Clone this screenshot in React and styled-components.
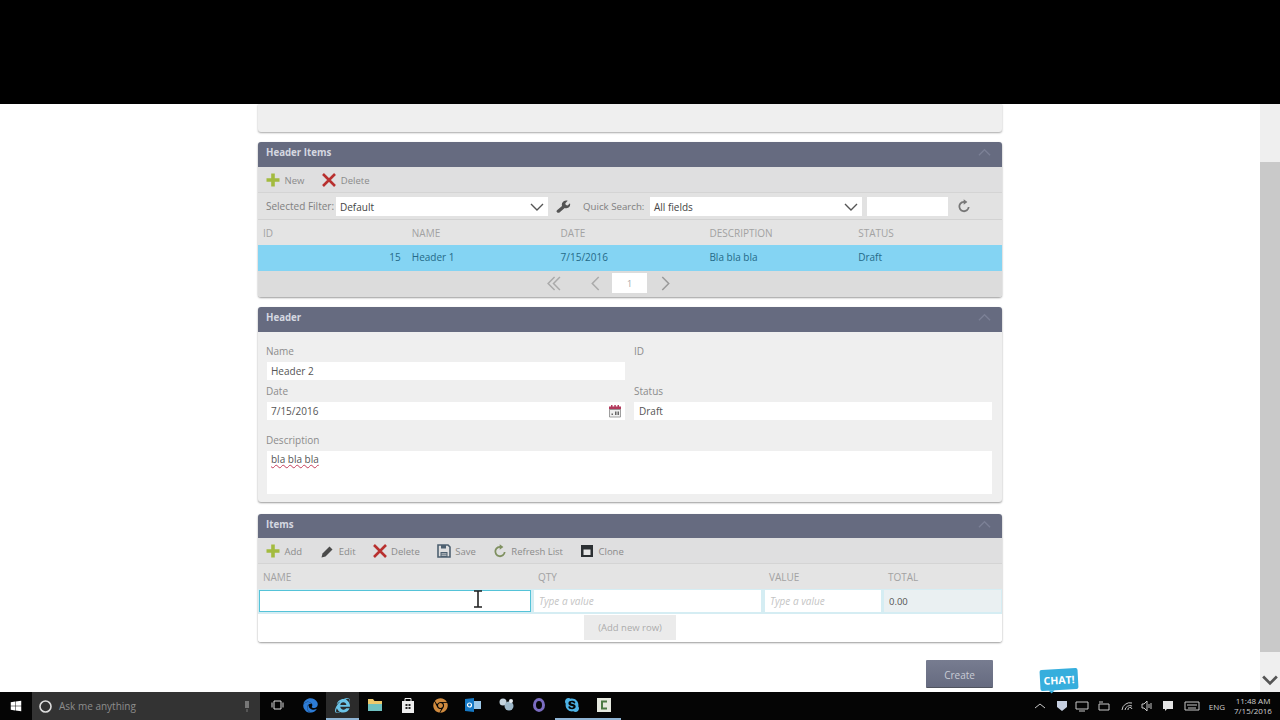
import React from 'react';
import styled, { createGlobalStyle } from 'styled-components';
import { FaChrome, FaEdge, FaInternetExplorer, FaSkype, FaWindows } from 'react-icons/fa';

const GlobalStyle = createGlobalStyle`
  html, body {
    margin: 0;
    height: 100%;
    overflow: hidden;
    background: #000;
    font-family: "Open Sans", "Liberation Sans", sans-serif;
  }
  * { box-sizing: border-box; }
`;

const Screen = styled.div`
  position: relative;
  width: 1280px;
  height: 720px;
  display: flex;
  flex-direction: column;
  background: #000;
`;

const TopBlack = styled.div`
  height: 104px;
  flex: none;
`;

const Viewport = styled.div`
  height: 588px;
  flex: none;
  display: flex;
  background: #fff;
  overflow: hidden;
`;

const Page = styled.div`
  flex: 1;
  display: flex;
  flex-direction: column;
  align-items: center;
`;

const Column = styled.div`
  width: 744px;
  display: flex;
  flex-direction: column;
`;

const Panel = styled.section`
  margin-top: ${(p) => p.$top || 10}px;
  background: ${(p) => p.$bg || '#efefef'};
  border-radius: 3px;
  box-shadow: 0 1px 2px rgba(0, 0, 0, 0.4);
  overflow: hidden;
`;

const Stub = styled.div`
  height: 28px;
  background: #efefef;
  border-radius: 0 0 3px 3px;
  box-shadow: 0 1px 2px rgba(0, 0, 0, 0.35);
`;

const TitleBar = styled.div`
  height: ${(p) => p.$h || 25}px;
  display: flex;
  align-items: center;
  justify-content: space-between;
  padding: 0 11px ${(p) => (p.$h ? 4 : 5)}px 8px;
  background: #666b80;
  color: #d5d8e0;
  font-size: 9.7px;
  font-weight: 700;
`;

const Toolbar = styled.div`
  height: 26px;
  display: flex;
  align-items: center;
  padding: 1px 0 0 8px;
  background: #dfdfe0;
  border-bottom: 1px solid #d4d4d4;
`;

const ToolButton = styled.div`
  display: flex;
  align-items: center;
  gap: 4.5px;
  margin-right: ${(p) => p.$gap}px;
  color: #8b8b8b;
  font-size: 9.5px;
`;

const FilterRow = styled.div`
  height: 27px;
  display: flex;
  align-items: center;
  padding-left: 8px;
  background: #e2e2e2;
  border-bottom: 1px solid #d2d2d2;
  color: #808080;
  font-size: 10px;
`;

const FilterLabel = styled.span`
  width: ${(p) => p.$w}px;
  flex: none;
  padding-left: ${(p) => p.$pad || 0}px;
  white-space: nowrap;
  font-size: ${(p) => p.$size || 10}px;
`;

const SelectBox = styled.div`
  width: ${(p) => p.$w}px;
  height: 19px;
  flex: none;
  display: flex;
  align-items: center;
  justify-content: space-between;
  padding: 1px 4px 0 4px;
  background: #fff;
  color: #444;
  font-size: 10px;
`;

const FilterSlot = styled.span`
  width: ${(p) => p.$w}px;
  flex: none;
  display: flex;
  justify-content: center;
`;

const QuickInput = styled.div`
  width: 81px;
  height: 19px;
  flex: none;
  margin-left: 5px;
  background: #fff;
`;

const HeadRow = styled.div`
  height: 25px;
  display: grid;
  grid-template-columns: ${(p) => p.$cols};
  align-items: center;
  padding-top: 1px;
  background: #e4e4e4;
`;

const HeadCell = styled.div`
  padding-left: 5px;
  color: #a2a2a2;
  font-size: 10px;
`;

const SelectedRow = styled.div`
  height: 26px;
  display: grid;
  grid-template-columns: repeat(5, 1fr);
  align-items: center;
  padding-bottom: 2px;
  background: #84d4f3;
  color: #256a88;
  font-size: 10px;
`;

const Cell = styled.div`
  padding: ${(p) => (p.$right ? '0 6px 0 0' : '0 0 0 5px')};
  text-align: ${(p) => (p.$right ? 'right' : 'left')};
`;

const Pager = styled.div`
  height: 26px;
  display: flex;
  align-items: center;
  justify-content: center;
  padding: 0 41px 2px 0;
  background: #dcdcdc;
  color: #b0b0b0;
`;

const PagerGap = styled.span`
  width: 27px;
`;

const PageNumber = styled.div`
  width: 35px;
  height: 20px;
  margin: 0 11px 0 9px;
  display: flex;
  align-items: center;
  justify-content: center;
  background: #fff;
  color: #a5a5a5;
  font-size: 9px;
`;

const FormBody = styled.div`
  padding: 12px 10px 8px 8px;
  display: grid;
  grid-template-columns: 359px 358px;
  column-gap: 9px;
  row-gap: 4px;
`;

const Field = styled.div`
  display: flex;
  flex-direction: column;
  gap: 4px;
  grid-column: ${(p) => (p.$wide ? '1 / -1' : 'auto')};
  margin-top: ${(p) => (p.$wide ? 9 : 0)}px;
`;

const FieldLabel = styled.label`
  height: 14px;
  line-height: 14px;
  color: #8c8c8c;
  font-size: 10px;
`;

const FieldInput = styled.div`
  height: 18px;
  display: flex;
  align-items: center;
  justify-content: space-between;
  margin-left: ${(p) => (p.$inset ? 1 : 0)}px;
  padding: 0 3px 1px ${(p) => (p.$inset ? 4 : 5)}px;
  background: ${(p) => (p.$empty ? 'transparent' : '#fff')};
  color: #555;
  font-size: 10px;
`;

const TextArea = styled.div`
  height: 43px;
  margin-left: 1px;
  padding: 1px 4px;
  background: #fff;
  color: #555;
  font-size: 10px;
  line-height: 14px;
`;

const Misspelled = styled.span`
  text-decoration: underline wavy #c4405c 1px;
  text-underline-offset: 1px;
`;

const EditRow = styled.div`
  height: 25px;
  display: grid;
  grid-template-columns: 275px 231px 119px 117px;
  background: #d5edf3;
  padding: 1px 1px 2px 1px;
`;

const EditCell = styled.div`
  margin-right: ${(p) => p.$mr || 0}px;
  display: flex;
  align-items: center;
  padding-left: 5px;
  background: ${(p) => (p.$total ? '#eaf0f2' : '#fff')};
  border: ${(p) => (p.$focus ? '1.5px solid #55c3d8' : 'none')};
  color: ${(p) => (p.$total ? '#555' : '#c4c4c4')};
  font-size: ${(p) => (p.$total ? 9.5 : 10)}px;
  font-style: ${(p) => (p.$total ? 'normal' : 'italic')};
`;

const AddRow = styled.div`
  height: 28px;
  display: flex;
  justify-content: center;
  background: #fff;
  padding-top: 1px;
`;

const AddButton = styled.div`
  width: 92px;
  height: 25px;
  display: flex;
  align-items: center;
  justify-content: center;
  background: #ebebeb;
  color: #ababab;
  font-size: 9.5px;
`;

const Actions = styled.div`
  display: flex;
  justify-content: flex-end;
  padding: 18px 9px 0 0;
`;

const CreateButton = styled.div`
  width: 67px;
  height: 28px;
  display: flex;
  align-items: center;
  justify-content: center;
  padding-top: 2px;
  background: linear-gradient(#777c90, #666b80);
  border-bottom: 1px solid #50545f;
  border-radius: 1px;
  color: #c9ccd6;
  font-size: 10px;
`;

const Scrollbar = styled.div`
  width: 20px;
  flex: none;
  display: flex;
  flex-direction: column;
  background: #efefef;
`;

const ScrollTrack = styled.div`
  height: 58px;
  flex: none;
`;

const ScrollThumb = styled.div`
  height: 490px;
  flex: none;
  background: #c9c9c9;
`;

const ScrollEnd = styled.div`
  flex: 1;
  display: flex;
  align-items: flex-end;
  justify-content: center;
  padding: 0 1px 4px 0;
`;

const Taskbar = styled.div`
  height: 28px;
  flex: none;
  display: flex;
  align-items: center;
  background: #050505;
`;

const StartButton = styled.div`
  width: 32px;
  height: 28px;
  flex: none;
  display: flex;
  align-items: center;
  justify-content: center;
  color: #fff;
`;

const SearchBox = styled.div`
  width: 228px;
  height: 28px;
  flex: none;
  display: flex;
  align-items: center;
  gap: 6px;
  padding: 0 9px 0 6px;
  background: #333;
  color: #8d8d8d;
  font-size: 10px;
`;

const SearchText = styled.span`
  flex: 1;
`;

const AppSlot = styled.div`
  width: 32.7px;
  height: 28px;
  flex: none;
  display: flex;
  align-items: center;
  justify-content: center;
  background: ${(p) => (p.$active ? '#2b2b2b' : 'transparent')};
  border-bottom: 2px solid ${(p) => (p.$open ? '#8fb4d4' : 'transparent')};
  color: ${(p) => p.$color || '#ddd'};
`;

const TaskApps = styled.div`
  display: flex;
  margin-left: 1px;
`;

const Tray = styled.div`
  margin-left: auto;
  display: flex;
  align-items: center;
  color: #cfcfcf;
  font-size: 8px;
`;

const TraySlot = styled.div`
  width: ${(p) => p.$w}px;
  display: flex;
  justify-content: center;
`;

const Clock = styled.div`
  width: 44px;
  margin-right: 5px;
  text-align: center;
  line-height: 10.5px;
  color: #cfcfcf;
  font-size: 8px;
`;

const ChatBadge = styled.div`
  position: absolute;
  left: 1040px;
  top: 669px;
  width: 38px;
  height: 21px;
  display: flex;
  align-items: center;
  justify-content: center;
  background: #36aedd;
  border-radius: 2px;
  color: #fff;
  font-size: 10.5px;
  font-weight: 700;
  transform: rotate(-3deg);

  &::after {
    content: '';
    position: absolute;
    left: 8px;
    bottom: -3px;
    border-top: 3px solid #36aedd;
    border-left: 3px solid transparent;
    border-right: 3px solid transparent;
  }
`;

const CursorMark = styled.svg`
  position: absolute;
  left: 473px;
  top: 590px;
`;

const PlusIcon = () => (
  <svg width="14" height="14" viewBox="0 0 14 14">
    <path d="M5.2 0.5h3.6v4.7h4.7v3.6H8.8v4.7H5.2V8.8H0.5V5.2h4.7z" fill="#a3bb3f" />
  </svg>
);

const CrossIcon = () => (
  <svg width="14" height="14" viewBox="0 0 14 14">
    <path d="M1 1L13 13M13 1L1 13" stroke="#b8302f" strokeWidth="2.6" />
  </svg>
);

const PencilIcon = () => (
  <svg width="13" height="13" viewBox="0 0 13 13">
    <path d="M0.5 12.5l1-4 7-7 3 3-7 7z" fill="#4a4a4a" />
  </svg>
);

const SaveIcon = () => (
  <svg width="14" height="14" viewBox="0 0 14 14">
    <path d="M1 1h10l2 2v10H1z" fill="none" stroke="#4d6070" strokeWidth="1.6" />
    <path d="M4 1h5v3.5H4zM3.5 8h7v5h-7z" fill="#4d6070" />
    <path d="M4.5 9.8h5M4.5 11.3h5" stroke="#dfdfe0" strokeWidth="0.8" />
  </svg>
);

const RefreshIcon = ({ color = '#7f9060' }) => (
  <svg width="14" height="14" viewBox="0 0 14 14">
    <path d="M8.6 3.1A4.7 4.7 0 1 0 11.7 8" fill="none" stroke={color} strokeWidth="1.8" />
    <path d="M6.7 0.3v5.4l3.7-2.7z" fill={color} />
  </svg>
);

const CloneIcon = () => (
  <svg width="14" height="14" viewBox="0 0 14 14">
    <path d="M1 1h12v12H1z" fill="#2c3033" />
    <path d="M3.5 5.5h7v5.5h-7z" fill="#e6e6e6" />
  </svg>
);

const WrenchIcon = () => (
  <svg width="15" height="14" viewBox="0 0 15 14">
    <path d="M1 13.2c-.7-.7-.5-1.4 0-1.9l5-4.4c-.5-1.800.1-3.600 1.700-4.700 1.200-.8 2.800-1 4-.4L9.300 4.300l.5 1.800 1.800.4 2.400-2.300c.5 1.700-.1 3.300-1.400 4.200-1.300.9-2.700 1-3.900.5l-4.900 4.300c-.8.7-1.900.8-2.800 0z" fill="#555" />
  </svg>
);

const Chevron = ({ dir = 'down', size = 14, color = '#555', stroke = 1.4 }) => {
  const paths = {
    down: 'M1 4l6 6 6-6',
    up: 'M1 10l6-6 6 6',
    left: 'M10 1L4 7l6 6',
    right: 'M4 1l6 6-6 6',
    first: 'M8 1L2 7l6 6M13 1L7 7l6 6',
  };
  return (
    <svg width={size} height={size} viewBox="0 0 14 14">
      <path d={paths[dir]} fill="none" stroke={color} strokeWidth={stroke} />
    </svg>
  );
};

const Collapse = () => <Chevron dir="up" size={13} color="#7c8196" stroke={1.3} />;

const Calendar = () => (
  <svg width="14" height="14" viewBox="0 0 14 14">
    <path d="M1 2.500h12v3H1z" fill="#b2395c" />
    <path d="M3 1h1.500v2H3zM6.300 1h1.500v2H6.300zM9.500 1H11v2H9.500z" fill="#b2395c" />
    <path d="M1.500 5.500h11v7.500h-11z" fill="#eee" stroke="#888" strokeWidth="0.8" />
    <path d="M3.500 9.500h1.500v1.500H3.500zM7 7.500h1.500v3.500H7zM9.500 7.500H11v3.500H9.500z" fill="#666" />
  </svg>
);

const Toolbtn = ({ icon, label, gap }) => (
  <ToolButton $gap={gap}>
    {icon}
    <span>{label}</span>
  </ToolButton>
);

const FolderIcon = () => (
  <svg width="16" height="14" viewBox="0 0 16 14">
    <path d="M1 1h5l1.500 2H15v10H1z" fill="#ecc96c" />
    <path d="M1 6h14v7H1z" fill="#6ec1c0" />
  </svg>
);

const StoreIcon = () => (
  <svg width="14" height="16" viewBox="0 0 14 16">
    <path d="M1 4h12v12H1z" fill="#eee" />
    <path d="M4 4V1.500h6V4" fill="none" stroke="#eee" />
    <path d="M4.500 7h2v2h-2zM7.500 7h2v2h-2zM4.500 10h2v2h-2zM7.500 10h2v2h-2z" fill="#222" />
  </svg>
);

const OutlookIcon = () => (
  <svg width="16" height="14" viewBox="0 0 16 14">
    <path d="M0 1l9-1v14l-9-1z" fill="#1578c4" />
    <path d="M9 3h7v8H9z" fill="#9cc8e8" />
    <circle cx="4.500" cy="7" r="2" fill="none" stroke="#fff" strokeWidth="1.200" />
  </svg>
);

const NetworkAppIcon = () => (
  <svg width="17" height="16" viewBox="0 0 17 16">
    <circle cx="5" cy="5" r="3.500" fill="#c4d3dd" />
    <circle cx="11" cy="9" r="4.500" fill="#9eb8c9" />
    <circle cx="13" cy="4" r="2" fill="#e8eef2" />
  </svg>
);

const RingIcon = () => (
  <svg width="14" height="16" viewBox="0 0 14 16">
    <ellipse cx="7" cy="8" rx="4.500" ry="5.500" fill="none" stroke="#7a6cc0" strokeWidth="3" />
  </svg>
);

const CamtasiaIcon = () => (
  <svg width="16" height="16" viewBox="0 0 16 16">
    <path d="M1 1h14v14H1z" fill="#e6e9df" />
    <path d="M11 4.500H6v7h5" fill="none" stroke="#4c7a44" strokeWidth="2" />
  </svg>
);

const TrayGlyph = ({ d, fill = 'none', w = 14 }) => (
  <svg width={w} height="12" viewBox={`0 0 ${w} 12`}>
    <path d={d} fill={fill} stroke={fill === 'none' ? '#c8c8c8' : 'none'} strokeWidth="1" />
  </svg>
);

const itemCols = '275px 231px 119px 119px';
const listCols = 'repeat(5, 1fr)';

const App = () => {
  return (
    <Screen>
      <GlobalStyle />
      <TopBlack />
      <Viewport>
        <Page>
          <Column>
            <Stub />

            <Panel>
              <TitleBar>
                <span>Header Items</span>
                <Collapse />
              </TitleBar>
              <Toolbar>
                <Toolbtn icon={<PlusIcon />} label="New" gap={18} />
                <Toolbtn icon={<CrossIcon />} label="Delete" />
              </Toolbar>
              <FilterRow>
                <FilterLabel $w={70}>Selected Filter:</FilterLabel>
                <SelectBox $w={212}>
                  Default
                  <Chevron />
                </SelectBox>
                <FilterSlot $w={30}>
                  <WrenchIcon />
                </FilterSlot>
                <FilterLabel $w={72} $pad={5} $size={9.7}>Quick Search:</FilterLabel>
                <SelectBox $w={212}>
                  All fields
                  <Chevron />
                </SelectBox>
                <QuickInput />
                <FilterSlot $w={31}>
                  <RefreshIcon color="#777" />
                </FilterSlot>
              </FilterRow>
              <HeadRow $cols={listCols}>
                <HeadCell>ID</HeadCell>
                <HeadCell>NAME</HeadCell>
                <HeadCell>DATE</HeadCell>
                <HeadCell>DESCRIPTION</HeadCell>
                <HeadCell>STATUS</HeadCell>
              </HeadRow>
              <SelectedRow>
                <Cell $right>15</Cell>
                <Cell>Header 1</Cell>
                <Cell>7/15/2016</Cell>
                <Cell>Bla bla bla</Cell>
                <Cell>Draft</Cell>
              </SelectedRow>
              <Pager>
                <Chevron dir="first" color="#aaa" size={15} />
                <PagerGap />
                <Chevron dir="left" color="#aaa" size={15} />
                <PageNumber>1</PageNumber>
                <Chevron dir="right" color="#999" size={15} />
              </Pager>
            </Panel>

            <Panel>
              <TitleBar>
                <span>Header</span>
                <Collapse />
              </TitleBar>
              <FormBody>
                <Field>
                  <FieldLabel>Name</FieldLabel>
                  <FieldInput $inset>Header 2</FieldInput>
                </Field>
                <Field>
                  <FieldLabel>ID</FieldLabel>
                  <FieldInput $empty />
                </Field>
                <Field>
                  <FieldLabel>Date</FieldLabel>
                  <FieldInput $inset>
                    7/15/2016
                    <Calendar />
                  </FieldInput>
                </Field>
                <Field>
                  <FieldLabel>Status</FieldLabel>
                  <FieldInput>Draft</FieldInput>
                </Field>
                <Field $wide>
                  <FieldLabel>Description</FieldLabel>
                  <TextArea>
                    <Misspelled>bla bla bla</Misspelled>
                  </TextArea>
                </Field>
              </FormBody>
            </Panel>

            <Panel $top={12} $bg="#fff">
              <TitleBar $h={24}>
                <span>Items</span>
                <Collapse />
              </TitleBar>
              <Toolbar>
                <Toolbtn icon={<PlusIcon />} label="Add" gap={19} />
                <Toolbtn icon={<PencilIcon />} label="Edit" gap={17} />
                <Toolbtn icon={<CrossIcon />} label="Delete" gap={17} />
                <Toolbtn icon={<SaveIcon />} label="Save" gap={17} />
                <Toolbtn icon={<RefreshIcon />} label="Refresh List" gap={17} />
                <Toolbtn icon={<CloneIcon />} label="Clone" />
              </Toolbar>
              <HeadRow $cols={itemCols}>
                <HeadCell>NAME</HeadCell>
                <HeadCell>QTY</HeadCell>
                <HeadCell>VALUE</HeadCell>
                <HeadCell>TOTAL</HeadCell>
              </HeadRow>
              <EditRow>
                <EditCell $focus $mr={3} />
                <EditCell $mr={4}>Type a value</EditCell>
                <EditCell $mr={3}>Type a value</EditCell>
                <EditCell $total>0.00</EditCell>
              </EditRow>
              <AddRow>
                <AddButton>(Add new row)</AddButton>
              </AddRow>
            </Panel>

            <Actions>
              <CreateButton>Create</CreateButton>
            </Actions>
          </Column>
        </Page>
        <Scrollbar>
          <ScrollTrack />
          <ScrollThumb />
          <ScrollEnd>
            <Chevron size={16} color="#555" stroke={2.4} />
          </ScrollEnd>
        </Scrollbar>
      </Viewport>

      <Taskbar>
        <StartButton>
          <FaWindows size={12} />
        </StartButton>
        <SearchBox>
          <svg width="15" height="15" viewBox="0 0 15 15">
            <circle cx="7.500" cy="7.500" r="5.500" fill="none" stroke="#ddd" strokeWidth="1.600" />
          </svg>
          <SearchText>Ask me anything</SearchText>
          <svg width="8" height="12" viewBox="0 0 8 12">
            <path d="M2 1h4v7H2z" fill="#777" />
            <path d="M4 9v3" stroke="#777" />
          </svg>
        </SearchBox>
        <TaskApps>
          <AppSlot>
            <svg width="13" height="10" viewBox="0 0 13 10">
              <path d="M3 1h7v8H3zM1 2.500v5M12 2.500v5" fill="none" stroke="#ddd" />
            </svg>
          </AppSlot>
          <AppSlot $color="#2d7cd6">
            <FaEdge size={15} />
          </AppSlot>
          <AppSlot $active $open $color="#6bc4e8">
            <FaInternetExplorer size={15} />
          </AppSlot>
          <AppSlot>
            <FolderIcon />
          </AppSlot>
          <AppSlot>
            <StoreIcon />
          </AppSlot>
          <AppSlot $color="#cf8a3e">
            <FaChrome size={15} />
          </AppSlot>
          <AppSlot>
            <OutlookIcon />
          </AppSlot>
          <AppSlot>
            <NetworkAppIcon />
          </AppSlot>
          <AppSlot>
            <RingIcon />
          </AppSlot>
          <AppSlot $open $color="#4db3e6">
            <FaSkype size={16} />
          </AppSlot>
          <AppSlot $open>
            <CamtasiaIcon />
          </AppSlot>
        </TaskApps>
        <Tray>
          <TraySlot $w={26}>
            <TrayGlyph d="M2 8l5-4 5 4" />
          </TraySlot>
          <TraySlot $w={18}>
            <TrayGlyph d="M2 1h10v6l-5 4-5-4z" fill="#c6cfe0" />
          </TraySlot>
          <TraySlot $w={22}>
            <TrayGlyph d="M1 2h12v7H1zM4 11h6" />
          </TraySlot>
          <TraySlot $w={22}>
            <TrayGlyph d="M2 4h10v6H2zM2 2h4" />
          </TraySlot>
          <TraySlot $w={24}>
            <TrayGlyph d="M2 10a8 8 0 0 1 10-7M5 10a5 5 0 0 1 7-4M8 10a2 2 0 0 1 4-1" />
          </TraySlot>
          <TraySlot $w={16}>
            <TrayGlyph d="M2 4h2l3-3v10L4 8H2zM9 4v4M11 3v6" />
          </TraySlot>
          <TraySlot $w={26}>
            <TrayGlyph d="M2 1h10v8H6l-2 2V9H2z" fill="#e4e4e4" />
          </TraySlot>
          <TraySlot $w={22}>
            <TrayGlyph w={16} d="M1 2h14v8H1zM3 5h10M4 8h8" />
          </TraySlot>
          <TraySlot $w={28}>ENG</TraySlot>
          <Clock>
            11:48 AM
            <br />
            7/15/2016
          </Clock>
        </Tray>
      </Taskbar>

      <ChatBadge>CHAT!</ChatBadge>
      <CursorMark width="10" height="18" viewBox="0 0 10 18">
        <path d="M1 1h8M1 17h8M5 1v16" stroke="#222" strokeWidth="1.600" fill="none" />
      </CursorMark>
    </Screen>
  );
};

export default App;
